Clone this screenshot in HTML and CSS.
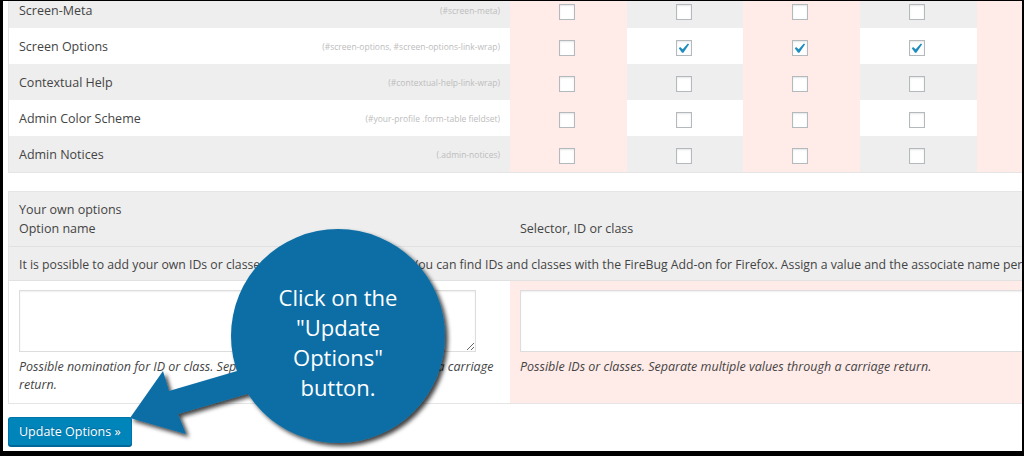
FILE: index.html
```html
<!DOCTYPE html>
<html lang="en">
<head>
<meta charset="utf-8">
<title>Adminimize options</title>
<link rel="stylesheet" href="styles.css">
</head>
<body>
<div class="frame">
  <div class="page">
    <table class="opts">
      <colgroup>
        <col class="c-label"><col class="c-box"><col class="c-box c-narrow"><col class="c-box"><col class="c-box"><col class="c-box">
      </colgroup>
      <tr class="alt">
        <td class="label"><div class="lab"><span>Screen-Meta</span><span class="sel">(#screen-meta)</span></div></td>
        <td class="box pink"><span class="cb"></span></td>
        <td class="box"><span class="cb"></span></td>
        <td class="box pink"><span class="cb"></span></td>
        <td class="box"><span class="cb"></span></td>
        <td class="box pink"><span class="cb"></span></td>
      </tr>
      <tr>
        <td class="label"><div class="lab"><span>Screen Options</span><span class="sel">(#screen-options, #screen-options-link-wrap)</span></div></td>
        <td class="box pink"><span class="cb"></span></td>
        <td class="box"><span class="cb on"><svg viewBox="4 2.5 14 14" width="14" height="14"><path d="M14.83 4.89l1.34.94-5.81 8.38H9.02L5.78 9.67l1.34-1.25 2.57 2.4z"/></svg></span></td>
        <td class="box pink"><span class="cb on"><svg viewBox="4 2.5 14 14" width="14" height="14"><path d="M14.83 4.89l1.34.94-5.81 8.38H9.02L5.78 9.67l1.34-1.25 2.57 2.4z"/></svg></span></td>
        <td class="box"><span class="cb on"><svg viewBox="4 2.5 14 14" width="14" height="14"><path d="M14.83 4.89l1.34.94-5.81 8.38H9.02L5.78 9.67l1.34-1.25 2.57 2.4z"/></svg></span></td>
        <td class="box pink"><span class="cb"></span></td>
      </tr>
      <tr class="alt">
        <td class="label"><div class="lab"><span>Contextual Help</span><span class="sel">(#contextual-help-link-wrap)</span></div></td>
        <td class="box pink"><span class="cb"></span></td>
        <td class="box"><span class="cb"></span></td>
        <td class="box pink"><span class="cb"></span></td>
        <td class="box"><span class="cb"></span></td>
        <td class="box pink"><span class="cb"></span></td>
      </tr>
      <tr>
        <td class="label"><div class="lab"><span>Admin Color Scheme</span><span class="sel">(#your-profile .form-table fieldset)</span></div></td>
        <td class="box pink"><span class="cb"></span></td>
        <td class="box"><span class="cb"></span></td>
        <td class="box pink"><span class="cb"></span></td>
        <td class="box"><span class="cb"></span></td>
        <td class="box pink"><span class="cb"></span></td>
      </tr>
      <tr class="alt">
        <td class="label"><div class="lab"><span>Admin Notices</span><span class="sel">(.admin-notices)</span></div></td>
        <td class="box pink"><span class="cb"></span></td>
        <td class="box"><span class="cb"></span></td>
        <td class="box pink"><span class="cb"></span></td>
        <td class="box"><span class="cb"></span></td>
        <td class="box pink"><span class="cb"></span></td>
      </tr>
    </table>

    <table class="own">
      <colgroup><col class="c-label"><col class="c-rest"></colgroup>
      <tr class="head">
        <td>Your own options<br>Option name</td>
        <td class="pink">Selector, ID or class</td>
      </tr>
      <tr class="desc">
        <td colspan="2">It is possible to add your own IDs or classes from elements and tags. You can find IDs and classes with the FireBug Add-on for Firefox. Assign a value and the associate name per line.</td>
      </tr>
      <tr class="fields">
        <td>
          <textarea class="ta" aria-label="Option name"></textarea>
          <p class="hint">Possible nomination for ID or class. Separate multiple nominations through a carriage return.</p>
        </td>
        <td class="pink">
          <textarea class="ta" aria-label="Selector, ID or class"></textarea>
          <p class="hint">Possible IDs or classes. Separate multiple values through a carriage return.</p>
        </td>
      </tr>
    </table>

    <button class="btn" type="button">Update Options &raquo;</button>
  </div>

  <svg class="callout" viewBox="3 1 1019 450" width="1019" height="450" aria-hidden="true">
    <defs>
      <filter id="sh" x="-20%" y="-20%" width="150%" height="150%">
        <feDropShadow dx="3" dy="3" stdDeviation="2" flood-color="#000" flood-opacity="0.75"/>
      </filter>
    </defs>
    <g filter="url(#sh)" class="bubble">
      <polygon points="130,418 163,371 169,391 285,357 292,381 178,414 186,434"/>
      <circle cx="338" cy="336" r="107"/>
    </g>
  </svg>
  <div class="callout-text">Click on the "Update Options" button.</div>
</div>
</body>
</html>
```

FILE: styles.css
```css
html, body {
  margin: 0;
  padding: 0;
}

body {
  background: #000;
  font-family: "Open Sans", "Noto Sans", sans-serif;
  color: #444;
}

.frame {
  position: relative;
  margin: 1px 2px 0 3px;
  height: 450px;
  background: #fff;
  overflow: hidden;
}

.page {
  padding-left: 5px;
}

table {
  border-collapse: separate;
  border-spacing: 0;
  table-layout: fixed;
  width: 1087px;
  border: 1px solid #e5e5e5;
  font-size: 12.5px;
  line-height: 19px;
  color: #444;
}

.c-label { width: 501px; }
.c-box { width: 117px; }
.c-narrow { width: 116px; }
.c-rest { width: 584px; }

/* checkbox table */
.opts {
  margin-top: -10px;
}

.opts td {
  height: 36px;
  padding: 0;
  vertical-align: middle;
}

.alt td {
  background: #eee;
}

.opts td.pink,
.own td.pink {
  background: #ffebe8;
}

.opts td.label {
  padding: 0 10px;
}

.lab {
  display: flex;
  align-items: center;
  justify-content: space-between;
}

.sel {
  font-size: 8.5px;
  color: #bdbdbd;
  white-space: nowrap;
}

.opts td.box {
  height: 32px;
  padding: 4px 3px 0 0;
}

.cb {
  display: block;
  margin: 0 auto;
  width: 16px;
  height: 16px;
  box-sizing: border-box;
  border: 1px solid #b4b9be;
  background: #fff;
  box-shadow: inset 0 1px 2px rgba(0, 0, 0, 0.1);
}

.cb svg {
  display: block;
  fill: #1e8cbe;
}

/* own options table */
.own {
  margin-top: 18px;
}

.own td {
  padding: 8px 10px;
  vertical-align: bottom;
}

.own .head td {
  background: #eee;
}

.own .desc td {
  background: #eee;
  border-top: 1px solid #e1e1e1;
  border-bottom: 1px solid #e1e1e1;
  padding: 8px 10px 6px;
  font-size: 12.25px;
  white-space: nowrap;
  overflow: hidden;
}

.own .fields td {
  vertical-align: top;
  padding: 9px 10px 9px;
}

.ta {
  display: block;
  width: 95%;
  height: 62px;
  box-sizing: border-box;
  margin: 0;
  border: 1px solid #ddd;
  background: #fff;
  box-shadow: inset 0 1px 2px rgba(0, 0, 0, 0.07);
  font: inherit;
}

.hint {
  margin: 6px 0 0;
  font-style: italic;
  line-height: 18px;
}

/* button */
.btn {
  display: block;
  margin-top: 13px;
  height: 29px;
  padding: 0 10px 1px;
  border: 1px solid #0073aa;
  border-bottom-color: #006799;
  border-radius: 3px;
  background: #0085ba;
  box-shadow: 0 1px 0 #006799;
  color: #fff;
  font-family: "Open Sans", "Noto Sans", sans-serif;
  font-size: 12.5px;
  text-shadow: 0 -1px 1px #006799;
}

/* callout overlay */
.callout {
  position: absolute;
  left: 0;
  top: 0;
  pointer-events: none;
}

.bubble {
  fill: #0a6ea6;
}

.callout-text {
  position: absolute;
  left: 265px;
  top: 281px;
  width: 140px;
  color: #fff;
  font-family: "Open Sans", "Noto Sans", sans-serif;
  font-size: 22px;
  line-height: 30px;
  text-align: center;
  pointer-events: none;
}
```
